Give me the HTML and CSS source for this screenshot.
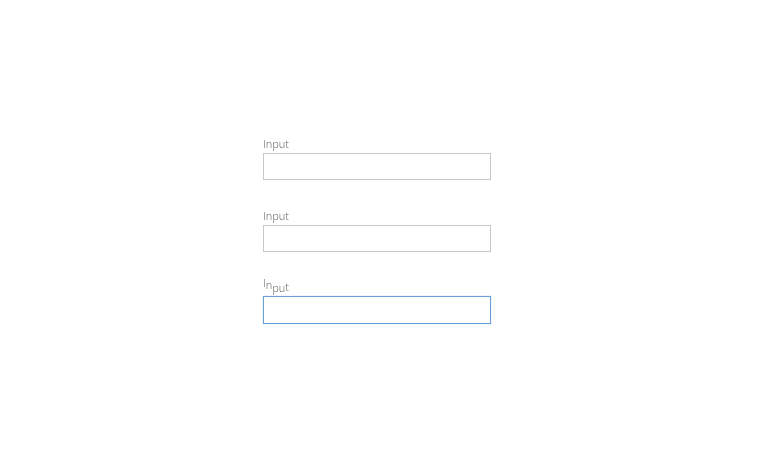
FILE: index.html
```html
<!DOCTYPE html>
<html>
<head>
<meta charset="utf-8">
<link rel="stylesheet" href="styles.css">
</head>
<body>
<div class="page">
  <div class="form">
    <div class="field">
      <label class="label">Input</label>
      <input class="input" type="text">
    </div>
    <div class="field">
      <label class="label">Input</label>
      <input class="input" type="text">
    </div>
    <div class="field">
      <label class="label wave"><span class="l1">I</span><span class="l2">n</span><span class="l3">p</span><span class="l4">u</span><span class="l5">t</span></label>
      <input class="input focus" type="text">
    </div>
  </div>
</div>
</body>
</html>
```

FILE: styles.css
```css
html, body {
  margin: 0;
  padding: 0;
  background: #ffffff;
}
.page {
  width: 768px;
  height: 462px;
  box-sizing: border-box;
  padding-top: 136px;
  padding-left: 263px;
}
.form {
  width: 228px;
  display: flex;
  flex-direction: column;
  gap: 28px;
}
.field {
  display: flex;
  flex-direction: column;
  gap: 1px;
}
.label {
  font-family: "Open Sans", "Lato", sans-serif;
  font-weight: 300;
  font-size: 11px;
  line-height: 16px;
  color: #5c5c5c;
  height: 16px;
  -webkit-font-smoothing: antialiased;
  will-change: transform;
}
.wave span {
  display: inline-block;
}
.wave .l1 { transform: translateY(-4px); }
.wave .l2 { transform: translateY(-2px); }
.wave .l3 { transform: translateY(1px); }
.wave .l4 { transform: translateY(1px); }
.wave .l5 { transform: translateY(0px); }
.input {
  box-sizing: border-box;
  width: 228px;
  height: 27px;
  margin: 0;
  border: 1px solid #c8c8c8;
  border-radius: 0;
  background: #fff;
  outline: none;
  padding: 0 6px;
}
.field:last-child {
  margin-top: -1px;
}
.input.focus {
  height: 28px;
  border: 1px solid #6a9fd6;
  box-shadow: 0 0 1px #9cc3ea;
}
```
